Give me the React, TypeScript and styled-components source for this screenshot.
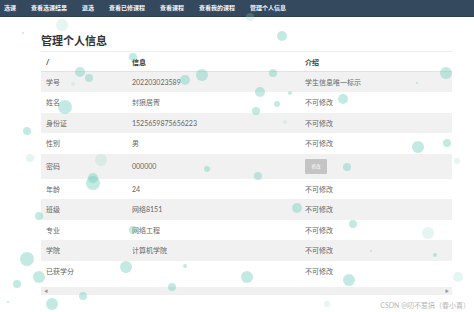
import styled, { createGlobalStyle } from "styled-components";

const GlobalStyle = createGlobalStyle`
  html, body {
    margin: 0;
    padding: 0;
    background: #fff;
  }
  body {
    width: 474px;
    height: 312px;
    overflow: hidden;
    font-family: Lato, "Noto Sans CJK SC", sans-serif;
  }
`;

const Page = styled.div`
  position: relative;
  width: 474px;
  height: 312px;
  overflow: hidden;
`;

const NavBar = styled.nav`
  display: flex;
  align-items: center;
  gap: 15px;
  height: 16px;
  padding-left: 4px;
  background: #34495e;
  border-bottom: 1px solid #2c3e50;
`;

const NavItem = styled.span`
  font-family: "Noto Sans CJK SC", sans-serif;
  font-size: 6px;
  font-weight: 700;
  color: #f4f6f8;
  line-height: 16px;
  white-space: nowrap;
`;

const Main = styled.main`
  width: 411px;
  padding: 0 0 0 41px;
`;

const Title = styled.h2`
  margin: 0;
  padding-top: 16px;
  height: 34px;
  box-sizing: border-box;
  font-family: "Noto Sans CJK SC", sans-serif;
  font-size: 11px;
  font-weight: 700;
  line-height: 14px;
  color: #2f3337;
`;

const Table = styled.table`
  width: 411px;
  border-collapse: collapse;
  table-layout: fixed;
  border-top: 1px solid #eee;
`;

const HeadCell = styled.th<{ $w: number }>`
  box-sizing: border-box;
  width: ${(p) => p.$w}px;
  height: 20px;
  padding: 0 5px;
  text-align: left;
  font-size: 7px;
  font-weight: 700;
  color: #333;
  border-bottom: 1px solid #e2e2e2;
`;

const Row = styled.tr<{ $striped: boolean; $tall?: boolean }>`
  background: ${(p) => (p.$striped ? "#f1f1f1" : "#fff")};
  height: ${(p) => (p.$tall ? 25 : 20.5)}px;
`;

const Cell = styled.td`
  padding: 0 5px;
  font-size: 7px;
  color: #666;
  white-space: nowrap;
  vertical-align: middle;
`;

const EditButton = styled.button`
  width: 22px;
  height: 15px;
  padding: 0;
  border: none;
  border-radius: 1px;
  background: #c4c4c4;
  color: #fff;
  font-family: "Noto Sans CJK SC", sans-serif;
  font-size: 4.5px;
`;

const ScrollTrack = styled.div`
  display: flex;
  align-items: center;
  justify-content: space-between;
  margin-top: 6px;
  height: 8px;
  padding: 0 3px;
  background: #f0f0f0;
  color: #999;
  font-size: 4px;
`;

const Watermark = styled.div`
  padding: 5px 4px 0 0;
  text-align: right;
  font-size: 7px;
  color: #b8b8b8;
  font-family: Lato, "Noto Sans CJK SC", sans-serif;
`;

const BubbleLayer = styled.div`
  position: absolute;
  inset: 0;
  pointer-events: none;
`;

const Bubble = styled.span<{ $faint?: boolean }>`
  position: absolute;
  border-radius: 50%;
  background: ${(p) => (p.$faint ? "rgba(150, 215, 200, 0.25)" : "rgba(110, 205, 185, 0.42)")};
`;

const rows: { label: string; info: string; note: string; edit?: boolean }[] = [
  { label: "学号", info: "202203023589", note: "学生信息唯一标示" },
  { label: "姓名", info: "封狼居胥", note: "不可修改" },
  { label: "身份证", info: "1525659875656223", note: "不可修改" },
  { label: "性别", info: "男", note: "不可修改" },
  { label: "密码", info: "000000", note: "", edit: true },
  { label: "年龄", info: "24", note: "不可修改" },
  { label: "班级", info: "网络8151", note: "不可修改" },
  { label: "专业", info: "网络工程", note: "不可修改" },
  { label: "学院", info: "计算机学院", note: "不可修改" },
  { label: "已获学分", info: "", note: "不可修改" },
];

// x, y, r, faint
const bubbles: [number, number, number, boolean?][] = [
  [80, 72, 5], [89, 78, 4], [65, 107, 7], [73, 84, 2, true], [27, 131, 4], [30, 158, 4, true],
  [133, 57, 4], [185, 80, 5], [202, 75, 6], [207, 169, 3], [93, 178, 5], [101, 160, 6, true],
  [273, 73, 4], [260, 92, 5], [290, 93, 2], [277, 104, 3], [256, 111, 4], [285, 122, 2, true],
  [343, 99, 5], [446, 73, 6], [417, 83, 1], [418, 147, 6], [447, 143, 4], [457, 161, 3, true],
  [347, 167, 4], [258, 176, 4], [93, 183, 7], [39, 216, 4], [133, 230, 4], [27, 259, 7],
  [39, 277, 6], [17, 284, 4], [126, 267, 6], [185, 266, 2], [172, 287, 4], [83, 296, 4],
  [52, 304, 6], [8, 302, 1], [297, 208, 5], [353, 224, 4], [428, 233, 6, true], [435, 255, 2],
  [371, 251, 1], [247, 277, 6], [349, 280, 6], [458, 277, 5, true], [327, 304, 3, true],
  [282, 36, 5], [250, 17, 4, true], [62, 25, 6, true], [23, 33, 1],
];

const navItems = ["选课", "查看选课结果", "退选", "查看已修课程", "查看课程", "查看我的课程", "管理个人信息"];

export default function App() {
  return (
    <>
      <GlobalStyle />
      <Page>
        <NavBar>
          {navItems.map((n) => (
            <NavItem key={n}>{n}</NavItem>
          ))}
        </NavBar>
        <Main>
          <Title>管理个人信息</Title>
          <Table>
            <thead>
              <tr>
                <HeadCell $w={86}>/</HeadCell>
                <HeadCell $w={173}>信息</HeadCell>
                <HeadCell $w={152}>介绍</HeadCell>
              </tr>
            </thead>
            <tbody>
              {rows.map((r, i) => (
                <Row key={r.label} $striped={i % 2 === 0} $tall={r.edit}>
                  <Cell>{r.label}</Cell>
                  <Cell>{r.info}</Cell>
                  <Cell>{r.edit ? <EditButton>修改</EditButton> : r.note}</Cell>
                </Row>
              ))}
            </tbody>
          </Table>
          <ScrollTrack>
            <span>◀</span>
            <span>▶</span>
          </ScrollTrack>
        </Main>
        <Watermark>CSDN @叨不惹搞（春小喜）</Watermark>
        <BubbleLayer>
          {bubbles.map(([x, y, r, f], i) => (
            <Bubble
              key={i}
              $faint={f}
              style={{ left: x - r, top: y - r, width: r * 2, height: r * 2 }}
            />
          ))}
        </BubbleLayer>
      </Page>
    </>
  );
}
